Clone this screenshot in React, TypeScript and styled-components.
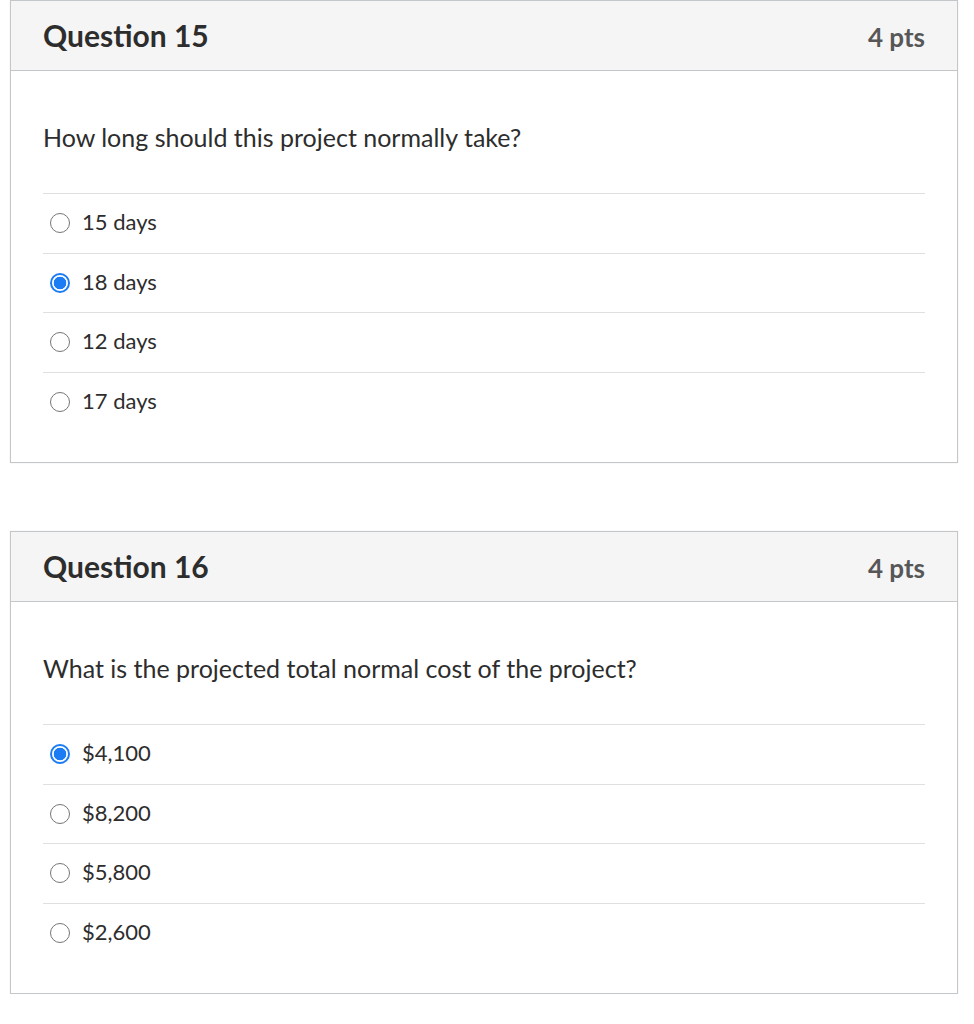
import React from "react";
import styled, { createGlobalStyle } from "styled-components";

const Global = createGlobalStyle`
  html, body { margin: 0; padding: 0; background: #fff; }
  body { font-family: Lato, "Open Sans", Arial, sans-serif; color: #2d2d2d; }
`;

const Page = styled.div`
  padding: 0 16px 0 10px;
  display: flex;
  flex-direction: column;
  gap: 68px;
`;

const Card = styled.section`
  width: 948px;
  box-sizing: border-box;
  border: 1px solid #c4c7c9;
  box-shadow: 0 0 1px rgba(0, 0, 0, 0.15);
  background: #fff;
`;

const Header = styled.header`
  height: 70px;
  box-sizing: border-box;
  background: #f5f5f5;
  border-bottom: 1px solid #c4c7c9;
  padding: 0 32px;
  display: flex;
  align-items: center;
  justify-content: space-between;
`;

const Title = styled.h2`
  margin: 0;
  font-size: 30px;
  line-height: 36px;
  font-weight: 700;
  color: #2d2d2d;
  margin-top: -2px;
`;

const Points = styled.span`
  font-size: 26px;
  line-height: 32px;
  font-weight: 700;
  color: #575757;
  margin-top: 2px;
`;

const Body = styled.div`
  padding: 51px 32px 31px;
`;

const Prompt = styled.p`
  margin: 0 0 41px;
  font-size: 25px;
  line-height: 30px;
  color: #2d2d2d;
`;

const Options = styled.div`
  display: flex;
  flex-direction: column;
`;

const Option = styled.label`
  height: 59.5px;
  box-sizing: border-box;
  border-top: 1px solid #e0e0e0;
  display: flex;
  align-items: center;
  padding-left: 7px;
  gap: 12px;
  font-size: 22px;
  line-height: 26px;
  color: #2d2d2d;
  padding-bottom: 2px;
`;

const Radio = styled.span<{ $checked: boolean }>`
  width: 20px;
  height: 20px;
  box-sizing: border-box;
  border-radius: 50%;
  border: ${(p) => (p.$checked ? "2px solid #1b7cf4" : "1.5px solid #767676")};
  background: ${(p) => (p.$checked ? "radial-gradient(circle, #1b7cf4 0 6px, #fff 6.6px)" : "#fff")};
  flex: none;
  margin-top: 2px;
`;

type Q = { title: string; prompt: string; options: string[]; selected: number };

const questions: Q[] = [
  {
    title: "Question 15",
    prompt: "How long should this project normally take?",
    options: ["15 days", "18 days", "12 days", "17 days"],
    selected: 1,
  },
  {
    title: "Question 16",
    prompt: "What is the projected total normal cost of the project?",
    options: ["$4,100", "$8,200", "$5,800", "$2,600"],
    selected: 0,
  },
];

export default function App() {
  return (
    <>
      <Global />
      <Page>
        {questions.map((q) => (
          <Card key={q.title}>
            <Header>
              <Title>{q.title}</Title>
              <Points>4 pts</Points>
            </Header>
            <Body>
              <Prompt>{q.prompt}</Prompt>
              <Options>
                {q.options.map((o, i) => (
                  <Option key={o}>
                    <Radio $checked={i === q.selected} />
                    {o}
                  </Option>
                ))}
              </Options>
            </Body>
          </Card>
        ))}
      </Page>
    </>
  );
}
